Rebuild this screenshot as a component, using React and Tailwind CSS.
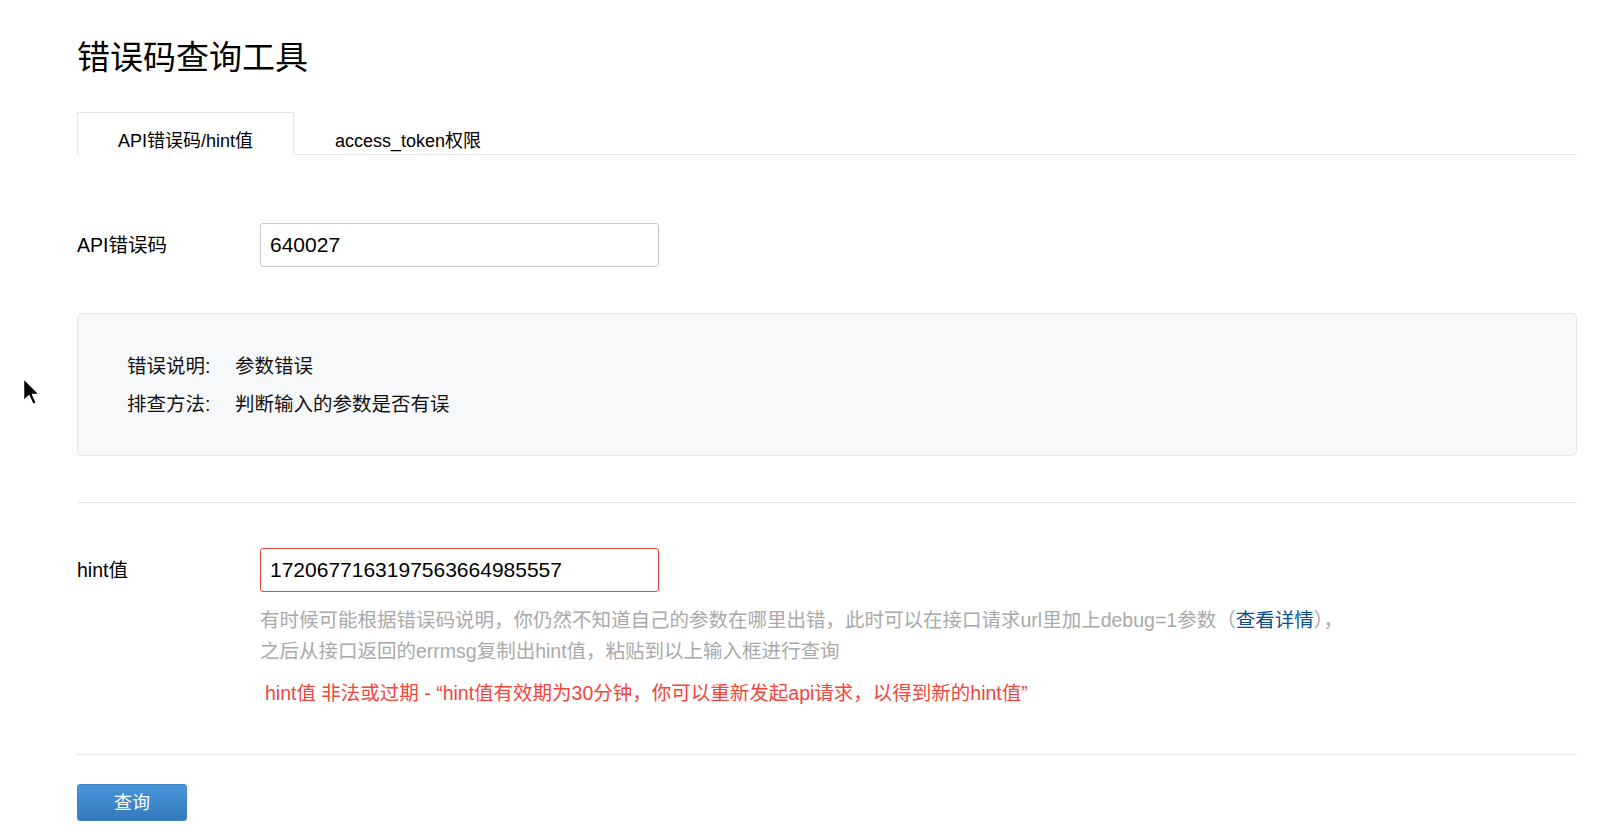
import React from "react";

function Cursor() {
  return (
    <svg
      className="absolute left-[22px] top-[377px]"
      width="20"
      height="30"
      viewBox="0 0 20 30"
    >
      <path
        d="M1.5 1.5 L1.5 24 L7 18.8 L11 27.5 L14.5 26 L10.6 17.5 L17.5 17.5 Z"
        fill="#000"
        stroke="#fff"
        strokeWidth="1.5"
        strokeLinejoin="round"
      />
    </svg>
  );
}

export default function App() {
  return (
    <div className="relative min-h-screen bg-white text-[#111] font-['Liberation_Sans','Noto_Sans_CJK_SC',sans-serif]">
      <Cursor />
      <div className="ml-[77px] w-[1500px] pt-[35px]">
        <h1 className="text-[33px] leading-[46px] font-normal text-black">
          错误码查询工具
        </h1>

        <div className="mt-[31px] flex border-b border-[#e3e4e8]">
          <div className="-mb-px h-[43px] border border-[#e3e4e8] border-b-white bg-white px-[40px] pt-[16px] text-[18px] leading-[24px] text-black">
            API错误码/hint值
          </div>
          <div className="-mb-px h-[43px] border border-transparent px-[40px] pt-[16px] text-[18px] leading-[24px] text-black">
            access_token权限
          </div>
        </div>

        <div className="mt-[68px] flex items-center">
          <div className="w-[183px] text-[19.5px] leading-[30px] text-black">API错误码</div>
          <input
            readOnly
            defaultValue="640027"
            className="h-[44px] w-[399px] rounded-[3px] border border-[#c9c9c9] bg-white pl-[9px] text-[21px] text-black outline-none"
          />
        </div>

        <div className="mt-[46px] rounded-[5px] border border-[#e4e6ea] bg-[#f7f8fa] pl-[49px] pt-[33px] pb-[32px] text-[19.5px] leading-[38px] text-[#111]">
          <div className="flex">
            <div className="w-[108px]">错误说明:</div>
            <div>参数错误</div>
          </div>
          <div className="flex">
            <div className="w-[108px]">排查方法:</div>
            <div>判断输入的参数是否有误</div>
          </div>
        </div>

        <div className="mt-[46px] border-t border-[#e6e7ea]" />

        <div className="mt-[45px] flex">
          <div className="flex h-[44px] w-[183px] items-center text-[19.5px] leading-[30px] text-black">
            hint值
          </div>
          <div className="flex flex-col">
            <input
              readOnly
              defaultValue="1720677163197563664985557"
              className="h-[44px] w-[399px] rounded-[3px] border border-[#e8453c] bg-white pl-[9px] text-[21px] text-black outline-none"
            />
            <p className="mt-[13px] text-[19.5px] leading-[31px] text-[#a9a9a9]">
              有时候可能根据错误码说明，你仍然不知道自己的参数在哪里出错，此时可以在接口请求url里加上debug=1参数（
              <a className="text-[#0f4c8a]">查看详情</a>
              ），
              <br />
              之后从接口返回的errmsg复制出hint值，粘贴到以上输入框进行查询
            </p>
            <p className="mt-[11px] pl-[5px] text-[19.5px] leading-[31px] text-[#f2453b]">
              hint值 非法或过期 - “hint值有效期为30分钟，你可以重新发起api请求，以得到新的hint值”
            </p>
          </div>
        </div>

        <div className="mt-[45px] border-t border-[#e6e7ea]" />

        <button className="mt-[29px] h-[37px] w-[110px] rounded-[3px] border border-[#3b82c6] bg-gradient-to-b from-[#4a95dc] to-[#3579bb] text-[18px] leading-[24px] text-white">
          查询
        </button>
      </div>
    </div>
  );
}
